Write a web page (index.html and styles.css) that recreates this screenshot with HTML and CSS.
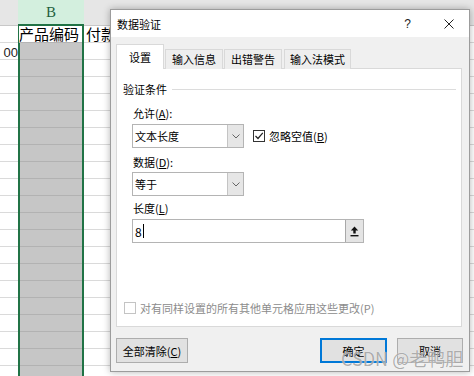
FILE: index.html
```html
<!DOCTYPE html>
<html lang="zh-CN">
<head>
    <meta charset="UTF-8">
    <title>数据验证</title>
    <link rel="stylesheet" href="styles.css">
</head>
<body>
    <!-- spreadsheet behind the dialog -->
    <div class="sheet">
        <div class="col col-a">
            <div class="col-head"></div>
            <div class="cell"></div>
            <div class="rows"><div class="num">00</div></div>
        </div>
        <div class="col col-b">
            <div class="col-head">B</div>
            <div class="col-body">
                <div class="cell active">产品编码</div>
                <div class="rows"></div>
            </div>
        </div>
        <div class="col col-c">
            <div class="col-head"></div>
            <div class="cell">付款</div>
            <div class="rows"></div>
        </div>
    </div>

    <div class="dialog">
        <div class="titlebar">
            <span class="title">数据验证</span>
            <span class="help">?</span>
            <svg class="close" width="10" height="10" viewBox="0 0 10 10">
                <path d="M0.5 0.5 L9.5 9.5 M9.5 0.5 L0.5 9.5" stroke="#222" stroke-width="1" fill="none"/>
            </svg>
        </div>

        <div class="dialog-body">
            <div class="tabs">
                <div class="tab selected">设置</div>
                <div class="tab">输入信息</div>
                <div class="tab">出错警告</div>
                <div class="tab">输入法模式</div>
            </div>

            <div class="panel">
                <div class="legend">
                    <span>验证条件</span>
                    <div class="legend-line"></div>
                </div>

                <div class="group">
                    <div class="label label-first">允许(<u>A</u>):</div>
                    <div class="row">
                        <div class="combo">
                            <span class="combo-text">文本长度</span>
                            <span class="combo-btn">
                                <svg width="8" height="5" viewBox="0 0 8 5"><path d="M0.5 0.5 L4 4 L7.5 0.5" stroke="#666" fill="none"/></svg>
                            </span>
                        </div>
                        <label class="check">
                            <span class="box">
                                <svg width="10" height="10" viewBox="0 0 10 10"><path d="M1.5 5 L4 7.5 L8.8 1.8" stroke="#222" stroke-width="1.2" fill="none"/></svg>
                            </span>
                            <span>忽略空值(<u>B</u>)</span>
                        </label>
                    </div>

                    <div class="label label-data">数据(<u>D</u>):</div>
                    <div class="combo combo-data">
                        <span class="combo-text">等于</span>
                        <span class="combo-btn">
                            <svg width="8" height="5" viewBox="0 0 8 5"><path d="M0.5 0.5 L4 4 L7.5 0.5" stroke="#666" fill="none"/></svg>
                        </span>
                    </div>

                    <div class="label label-len">长度(<u>L</u>)</div>
                    <div class="input">
                        <span class="input-text">8</span><span class="caret"></span>
                        <span class="ref-btn">
                            <svg width="9" height="11" viewBox="0 0 9 11">
                                <path d="M4.5 0.5 L0.8 4.5 L3.3 4.5 L3.3 7.5 L5.7 7.5 L5.7 4.5 L8.2 4.5 Z" fill="#111"/>
                                <rect x="0.5" y="9" width="8" height="1.4" fill="#111"/>
                            </svg>
                        </span>
                    </div>
                </div>

                <label class="check disabled">
                    <span class="box"></span>
                    <span>对有同样设置的所有其他单元格应用这些更改(P)</span>
                </label>
            </div>

            <div class="buttons">
                <button class="btn">全部清除(<u>C</u>)</button>
                <button class="btn primary">确定</button>
                <button class="btn">取消</button>
            </div>
        </div>
    </div>

    <div class="watermark">CSDN @老鸭胆</div>
</body>
</html>
```

FILE: styles.css
```css
body {
    margin: 0;
    width: 474px;
    height: 376px;
    overflow: hidden;
    position: relative;
    background-color: #fff;
    font-family: "Noto Sans CJK SC", "Liberation Sans", sans-serif;
}

/* Sheet */
.sheet {
    display: flex;
    height: 376px;
}

.col {
    display: flex;
    flex-direction: column;
}

.col-a {
    width: 18px;
}

.col-b {
    width: 66px;
}

.col-c {
    flex: 1;
    overflow: hidden;
}

.col-head {
    height: 25px;
    background-color: #e6e6e6;
    border-bottom: 1px solid #c8c8c8;
    flex-shrink: 0;
}

.col-b .col-head {
    height: 24px;
    background-color: #d3efde;
    border-bottom: none;
    color: #1f5f3d;
    font-family: "Liberation Serif", serif;
    font-size: 15px;
    line-height: 24px;
    text-align: center;
}

.col-body {
    flex: 1;
    display: flex;
    flex-direction: column;
    border: 2px solid #217346;
    border-bottom: none;
}

.cell {
    height: 16px;
    border-bottom: 1px solid #dadada;
    font-size: 15px;
    line-height: 16px;
    white-space: nowrap;
    flex-shrink: 0;
}

.col-c .cell {
    padding-left: 2px;
}

.cell.active {
    background-color: #fff;
    border-bottom: 1px solid #b4b4b4;
    margin-left: -1px;
}

.rows {
    flex: 1;
    background: repeating-linear-gradient(to bottom, transparent 0 16px, #dadada 16px 17px);
}

.col-b .rows {
    background: repeating-linear-gradient(to bottom, #c6c6c6 0 16px, #b2b2b2 16px 17px);
}

.num {
    font-family: "Liberation Sans", sans-serif;
    font-size: 13px;
    line-height: 17px;
    padding-top: 1px;
    text-align: right;
    color: #222;
}

/* Dialog */
.dialog {
    position: absolute;
    left: 110px;
    top: 9px;
    width: 358px;
    height: 361px;
    border: 1px solid #9c9c9c;
    background-color: #f0f0f0;
    box-shadow: 0 0 7px rgba(0,0,0,0.3);
    display: flex;
    flex-direction: column;
    font-size: 11px;
    color: #000;
}

.titlebar {
    height: 27px;
    background-color: #fff;
    display: flex;
    align-items: center;
    padding: 0 15px 0 6px;
    flex-shrink: 0;
}

.title {
    font-size: 11px;
}

.help {
    margin-left: auto;
    margin-right: 33px;
    font-family: "Liberation Sans", sans-serif;
    font-size: 12px;
    color: #222;
}

.close {
    display: block;
}

.dialog-body {
    flex: 1;
    display: flex;
    flex-direction: column;
    padding: 8px 7px 8px 5px;
}

.tabs {
    display: flex;
    align-items: flex-end;
    gap: 1px;
    height: 24px;
    margin-bottom: -1px;
    position: relative;
    z-index: 1;
}

.tab {
    height: 19px;
    line-height: 19px;
    padding: 0 6px;
    border: 1px solid #d9d9d9;
    border-bottom: none;
    background-color: #eeeeee;
}

.tab.selected {
    height: 24px;
    line-height: 24px;
    padding: 0 12px;
    background-color: #fff;
}

.tabs .tab:last-child {
    margin-left: 1px;
    padding: 0 5px;
}

.panel {
    flex: 1;
    display: flex;
    flex-direction: column;
    background-color: #fff;
    border: 1px solid #d9d9d9;
    padding: 12px 0 10px 0;
}

.legend {
    display: flex;
    align-items: center;
    gap: 5px;
    height: 16px;
    margin: 0 5px 0 6px;
}

.legend-line {
    flex: 1;
    height: 1px;
    background-color: #dcdcdc;
}

.group {
    margin-left: 15px;
}

.label {
    height: 16px;
    line-height: 16px;
    padding-left: 1px;
}

.label-first {
    margin-top: 8px;
    margin-bottom: 3px;
}

.label-data {
    margin-top: 6px;
    margin-bottom: 2px;
}

.label-len {
    margin-top: 4px;
    margin-bottom: 3px;
}

.row {
    display: flex;
    align-items: center;
    gap: 9px;
}

.combo {
    width: 110px;
    height: 22px;
    border: 1px solid #b4b4b4;
    display: flex;
    align-items: center;
}

.combo-text {
    flex: 1;
    padding-left: 2px;
}

.combo-btn {
    width: 15px;
    height: 22px;
    border-left: 1px solid #c4c4c4;
    background-color: #e6e6e6;
    display: flex;
    align-items: center;
    justify-content: center;
}

.check {
    display: flex;
    align-items: center;
    gap: 4px;
}

.box {
    width: 10px;
    height: 10px;
    border: 1px solid #333;
    display: flex;
    align-items: center;
    justify-content: center;
}

.check.disabled {
    margin-top: auto;
    margin-left: 7px;
    height: 16px;
    color: #8c8c8c;
}

.check.disabled .box {
    border-color: #c4c4c4;
}

.input {
    width: 230px;
    height: 22px;
    border: 1px solid #b4b4b4;
    display: flex;
    align-items: center;
}

.input-text {
    padding-left: 2px;
    font-size: 12px;
}

.caret {
    width: 1px;
    height: 14px;
    background-color: #000;
    margin-left: 1px;
}

.ref-btn {
    margin-left: auto;
    width: 17px;
    height: 22px;
    border-left: 1px solid #a8a8a8;
    background-color: #e4e4e4;
    display: flex;
    align-items: center;
    justify-content: center;
}

.buttons {
    display: flex;
    margin-top: 11px;
    height: 25px;
}

.btn {
    font-family: inherit;
    font-size: 11px;
    color: #000;
    background-color: #e1e1e1;
    border: 1px solid #adadad;
    height: 25px;
    padding: 0;
    width: 72px;
}

.btn.primary {
    width: 67px;
    margin-left: auto;
    border: 2px solid #0078d7;
}

.btn.primary + .btn {
    width: 66px;
    margin-left: 10px;
    margin-right: -1px;
}

.watermark {
    position: absolute;
    left: 341px;
    top: 346px;
    font-size: 18px;
    line-height: 24px;
    color: rgba(105,105,105,0.55);
    text-shadow: 0 0 1px #fff;
    white-space: nowrap;
}
```
